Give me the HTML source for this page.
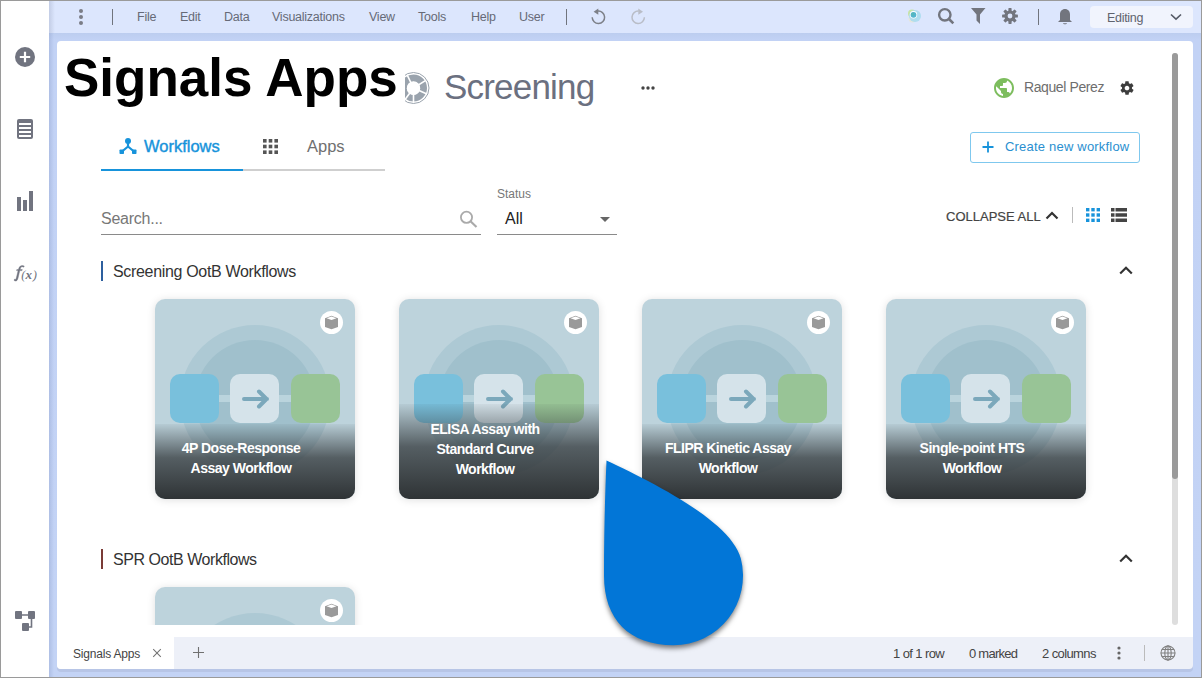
<!DOCTYPE html>
<html><head><meta charset="utf-8">
<style>
*{margin:0;padding:0;box-sizing:border-box}
html,body{width:1202px;height:678px;overflow:hidden;background:#fff;font-family:"Liberation Sans",sans-serif}
.a{position:absolute}
.t{position:absolute;white-space:nowrap;line-height:1}
#frame{position:absolute;left:0;top:0;width:1202px;height:678px;border:1px solid #9a9a9a;z-index:50;pointer-events:none}
#side{position:absolute;left:1px;top:1px;width:48px;height:676px;background:#fff}
#topbar{position:absolute;left:49px;top:1px;width:1152px;height:32px;background:#dce6fd}
#topsh{position:absolute;left:49px;top:1px;width:6px;height:32px;background:linear-gradient(to right,rgba(120,130,160,0.25),rgba(120,130,160,0))}
#strip{position:absolute;left:49px;top:33px;width:1152px;height:644px;background:linear-gradient(to bottom,#bccdef 0px,#c2d2f5 7px,#c3d3f5 100%)}
#main{position:absolute;left:57px;top:41px;width:1136px;height:620px;background:#fff;border-radius:4px 4px 0 0;overflow:hidden}
#foot{position:absolute;left:57px;top:637px;width:1136px;height:32px;background:#edf0f8;border-radius:0 0 4px 4px;box-shadow:0 3px 0 #b7c5e6}
.menu{position:absolute;top:11px;letter-spacing:-0.25px;font-size:12.5px;color:#666a77;line-height:1;white-space:nowrap}
.sep{position:absolute;width:1px;background:#70747d}
.card{position:absolute;width:200px;height:200px;border-radius:10px;background:#bdd3dc;overflow:hidden;box-shadow:0 1px 8px rgba(0,0,0,0.13)}
.c1{position:absolute;left:25px;top:26px;width:150px;height:150px;border-radius:50%;background:#adc9d4}
.c2{position:absolute;left:40px;top:41px;width:120px;height:120px;border-radius:50%;background:#a0c0cc}
.bar{position:absolute;left:30px;top:96px;width:140px;height:7px;background:#bad4dd}
.sq{position:absolute;top:75.4px;width:49px;height:49px;border-radius:10px}
.arr{position:absolute;left:86px;top:90px}
.badge{position:absolute;left:165px;top:12px;width:23px;height:23px;border-radius:50%;background:#fff}
.badge svg{position:absolute;left:4px;top:4px}
.ov{position:absolute;left:0;right:0;bottom:0;background:linear-gradient(to bottom,rgba(50,55,58,0.05) 0%,rgba(50,55,58,0.75) 45%,rgba(44,48,50,0.98) 100%)}
.tx{position:absolute;left:0;width:172px;text-align:center;color:#fff;font-weight:bold;font-size:14px;line-height:20px;letter-spacing:-0.5px}
</style></head>
<body>
<div id="side"></div>
<div id="topbar"></div>
<div id="topsh"></div>
<div id="strip"></div>
<div class="a" style="left:49px;top:33px;width:5px;height:644px;background:linear-gradient(to right,rgba(100,120,170,0.22),rgba(100,120,170,0))"></div>
<div id="main"></div>
<div class="a" style="left:57px;top:41px;width:1110px;height:584px;overflow:hidden">
<div class="a" style="left:-57px;top:-41px;width:1202px;height:678px">
<div class="card" style="left:155px;top:299px">
<div class="c1"></div><div class="c2"></div>
<div class="bar"></div>
<div class="sq" style="left:15px;background:#79c0dc"></div>
<div class="sq" style="left:75px;background:#d5e3ea"></div>
<div class="sq" style="left:136px;background:#98c496"></div>
<svg class="arr" width="30" height="20" viewBox="0 0 30 20"><path d="M3 10H26M18 2.5L25.5 10L18 17.5" fill="none" stroke="#7ba8bb" stroke-width="4" stroke-linecap="round" stroke-linejoin="round"/></svg>
<div class="badge"><svg width="15" height="15" viewBox="0 0 15 15"><path d="M1 3.2L7.5 0.8L14 3.2V12L7.5 14.2L1 12Z" fill="#9a9a9a"/><path d="M2.6 3.3L7.5 1.6L12.4 3.3L7.5 5Z" fill="#fff"/></svg></div><div class="ov" style="top:125px"></div><div class="tx" style="top:139px">4P Dose-Response<br>Assay Workflow</div></div>
<div class="card" style="left:399px;top:299px">
<div class="c1"></div><div class="c2"></div>
<div class="bar"></div>
<div class="sq" style="left:15px;background:#79c0dc"></div>
<div class="sq" style="left:75px;background:#d5e3ea"></div>
<div class="sq" style="left:136px;background:#98c496"></div>
<svg class="arr" width="30" height="20" viewBox="0 0 30 20"><path d="M3 10H26M18 2.5L25.5 10L18 17.5" fill="none" stroke="#7ba8bb" stroke-width="4" stroke-linecap="round" stroke-linejoin="round"/></svg>
<div class="badge"><svg width="15" height="15" viewBox="0 0 15 15"><path d="M1 3.2L7.5 0.8L14 3.2V12L7.5 14.2L1 12Z" fill="#9a9a9a"/><path d="M2.6 3.3L7.5 1.6L12.4 3.3L7.5 5Z" fill="#fff"/></svg></div><div class="ov" style="top:105px"></div><div class="tx" style="top:119.5px">ELISA Assay with<br>Standard Curve<br>Workflow</div></div>
<div class="card" style="left:642px;top:299px">
<div class="c1"></div><div class="c2"></div>
<div class="bar"></div>
<div class="sq" style="left:15px;background:#79c0dc"></div>
<div class="sq" style="left:75px;background:#d5e3ea"></div>
<div class="sq" style="left:136px;background:#98c496"></div>
<svg class="arr" width="30" height="20" viewBox="0 0 30 20"><path d="M3 10H26M18 2.5L25.5 10L18 17.5" fill="none" stroke="#7ba8bb" stroke-width="4" stroke-linecap="round" stroke-linejoin="round"/></svg>
<div class="badge"><svg width="15" height="15" viewBox="0 0 15 15"><path d="M1 3.2L7.5 0.8L14 3.2V12L7.5 14.2L1 12Z" fill="#9a9a9a"/><path d="M2.6 3.3L7.5 1.6L12.4 3.3L7.5 5Z" fill="#fff"/></svg></div><div class="ov" style="top:125px"></div><div class="tx" style="top:139px">FLIPR Kinetic Assay<br>Workflow</div></div>
<div class="card" style="left:886px;top:299px">
<div class="c1"></div><div class="c2"></div>
<div class="bar"></div>
<div class="sq" style="left:15px;background:#79c0dc"></div>
<div class="sq" style="left:75px;background:#d5e3ea"></div>
<div class="sq" style="left:136px;background:#98c496"></div>
<svg class="arr" width="30" height="20" viewBox="0 0 30 20"><path d="M3 10H26M18 2.5L25.5 10L18 17.5" fill="none" stroke="#7ba8bb" stroke-width="4" stroke-linecap="round" stroke-linejoin="round"/></svg>
<div class="badge"><svg width="15" height="15" viewBox="0 0 15 15"><path d="M1 3.2L7.5 0.8L14 3.2V12L7.5 14.2L1 12Z" fill="#9a9a9a"/><path d="M2.6 3.3L7.5 1.6L12.4 3.3L7.5 5Z" fill="#fff"/></svg></div><div class="ov" style="top:125px"></div><div class="tx" style="top:139px">Single-point HTS<br>Workflow</div></div>
<div class="card" style="left:155px;top:587px">
<div class="c1"></div><div class="c2"></div>
<div class="bar"></div>
<div class="sq" style="left:15px;background:#79c0dc"></div>
<div class="sq" style="left:75px;background:#d5e3ea"></div>
<div class="sq" style="left:136px;background:#98c496"></div>
<svg class="arr" width="30" height="20" viewBox="0 0 30 20"><path d="M3 10H26M18 2.5L25.5 10L18 17.5" fill="none" stroke="#7ba8bb" stroke-width="4" stroke-linecap="round" stroke-linejoin="round"/></svg>
<div class="badge"><svg width="15" height="15" viewBox="0 0 15 15"><path d="M1 3.2L7.5 0.8L14 3.2V12L7.5 14.2L1 12Z" fill="#9a9a9a"/><path d="M2.6 3.3L7.5 1.6L12.4 3.3L7.5 5Z" fill="#fff"/></svg></div></div>

</div></div>
<div id="foot"></div>
<div id="frame"></div>

<!-- top menu -->
<div class="a" style="left:79px;top:9px;width:4px;height:4px;border-radius:2px;background:#7a7d86"></div>
<div class="a" style="left:79px;top:15px;width:4px;height:4px;border-radius:2px;background:#7a7d86"></div>
<div class="a" style="left:79px;top:21px;width:4px;height:4px;border-radius:2px;background:#7a7d86"></div>
<div class="sep" style="left:112px;top:9px;height:16px"></div>
<div class="menu" style="left:137px">File</div>
<div class="menu" style="left:180px">Edit</div>
<div class="menu" style="left:224px">Data</div>
<div class="menu" style="left:272px">Visualizations</div>
<div class="menu" style="left:369px">View</div>
<div class="menu" style="left:418px">Tools</div>
<div class="menu" style="left:471px">Help</div>
<div class="menu" style="left:519px">User</div>
<div class="sep" style="left:566px;top:9px;height:16px"></div>

<!-- heading -->
<div class="t" style="left:64px;top:49.7px;font-size:53px;font-weight:bold;color:#000;transform:scaleY(1.026);transform-origin:0 0">Signals Apps</div>
<div class="t" style="left:444px;top:69.3px;font-size:35px;letter-spacing:-0.8px;color:#6b7080">Screening</div>
<div class="t" style="left:1024px;top:80px;font-size:14px;letter-spacing:-0.4px;color:#6e6e6e">Raquel Perez</div>

<!-- tabs -->
<div class="t" style="left:144px;top:138px;font-size:16.5px;color:#1793db;-webkit-text-stroke:0.4px #1793db">Workflows</div>
<div class="t" style="left:307px;top:138px;font-size:16.5px;color:#707070">Apps</div>
<div class="a" style="left:101px;top:169px;width:284px;height:2px;background:#cfcfcf"></div>
<div class="a" style="left:101px;top:169px;width:142px;height:2px;background:#1793db"></div>

<!-- search -->
<div class="t" style="left:101px;top:211px;font-size:16px;letter-spacing:-0.25px;color:#777">Search...</div>
<div class="a" style="left:101px;top:234px;width:380px;height:1px;background:#8a8a8a"></div>
<div class="t" style="left:497px;top:188px;font-size:12px;color:#777">Status</div>
<div class="t" style="left:505px;top:211px;font-size:16px;color:#222">All</div>
<div class="a" style="left:497px;top:234px;width:120px;height:1px;background:#8a8a8a"></div>

<div class="t" style="left:946px;top:210px;font-size:13px;color:#444;-webkit-text-stroke:0.2px #444">COLLAPSE ALL</div>
<div class="a" style="left:1072px;top:207px;width:1px;height:16px;background:#bbb"></div>

<div class="a" style="left:970px;top:132px;width:170px;height:31px;border:1px solid #7fc8ee;border-radius:3px"></div>
<div class="t" style="left:1005px;top:140px;font-size:13px;letter-spacing:0.2px;color:#2a8fd0">Create new workflow</div>

<!-- sections -->
<div class="a" style="left:101px;top:261px;width:2px;height:20px;background:#2d5f9e"></div>
<div class="t" style="left:113px;top:264px;font-size:16px;letter-spacing:-0.33px;color:#333">Screening OotB Workflows</div>
<div class="a" style="left:101px;top:549px;width:2px;height:20px;background:#7a3b36"></div>
<div class="t" style="left:113px;top:552px;font-size:16px;letter-spacing:-0.45px;color:#333">SPR OotB Workflows</div>

<!-- footer -->
<div class="a" style="left:57px;top:637px;width:117px;height:32px;background:#fff;border-radius:0 0 0 4px"></div>
<div class="t" style="left:73px;top:648px;font-size:12px;letter-spacing:-0.2px;color:#444">Signals Apps</div>
<div class="t" style="left:893px;top:647px;font-size:13px;letter-spacing:-0.6px;color:#444">1 of 1 row</div>
<div class="t" style="left:969px;top:647px;font-size:13px;letter-spacing:-0.75px;color:#444">0 marked</div>
<div class="t" style="left:1042px;top:647px;font-size:13px;letter-spacing:-0.6px;color:#444">2 columns</div>
<div class="a" style="left:1144px;top:645px;width:1px;height:16px;background:#bbb"></div>


<!-- sidebar icons -->
<svg class="a" style="left:15px;top:47px" width="20" height="20" viewBox="0 0 20 20"><circle cx="10" cy="10" r="10" fill="#717480"/><path d="M10 4.8V15.2M4.8 10H15.2" stroke="#fff" stroke-width="2.2"/></svg>
<svg class="a" style="left:17px;top:119px" width="16" height="20" viewBox="0 0 16 20"><rect x="0" y="0" width="16" height="20" rx="2" fill="#717480"/><rect x="2" y="4" width="12" height="2" fill="#fff"/><rect x="2" y="8" width="12" height="2" fill="#fff"/><rect x="2" y="12" width="12" height="2" fill="#fff"/><rect x="2" y="16" width="12" height="2" fill="#fff"/></svg>
<svg class="a" style="left:17px;top:191px" width="16" height="20" viewBox="0 0 16 20"><rect x="0" y="6" width="4" height="14" fill="#717480"/><rect x="6" y="9" width="4" height="11" fill="#717480"/><rect x="12" y="0" width="4" height="20" fill="#717480"/></svg>
<svg class="a" style="left:12px;top:265px" width="28" height="18" viewBox="0 0 28 18"><path d="M2 15.2C3.5 16.8 5.2 16.2 6 13.2L7.8 5.6H10L10.3 4.6H8.1L8.4 3.4C8.9 1.5 10.2 1.3 11.6 2.2L12.3 1.1C10.3 -0.1 7.6 0.6 6.8 3.3L6.4 4.6H4.8L4.5 5.6H6.1L4.3 13.1C3.9 14.6 3.1 14.8 2.6 14.1Z" fill="#717480" stroke="#717480" stroke-width="0.4"/><text x="9.2" y="14" font-family="Liberation Serif" font-style="italic" font-size="12.5" fill="#717480">(</text><text x="13.6" y="14" font-family="Liberation Serif" font-style="italic" font-weight="bold" font-size="13" fill="#717480">x</text><text x="20.8" y="14" font-family="Liberation Serif" font-style="italic" font-size="12.5" fill="#717480">)</text></svg>
<svg class="a" style="left:15px;top:611px" width="21" height="20" viewBox="0 0 21 20"><rect x="0" y="0" width="7" height="8" rx="1" fill="#717480"/><rect x="13" y="0" width="7" height="8" rx="1" fill="#717480"/><rect x="7" y="12" width="7" height="8" rx="1" fill="#717480"/><path d="M7 4H13M16.5 8V16H14" fill="none" stroke="#717480" stroke-width="1.6"/></svg>

<!-- topbar icons -->
<svg class="a" style="left:590px;top:8px" width="16" height="18" viewBox="0 0 16 18"><path d="M7.9 3.1A6.2 6.2 0 1 1 2.2 9.3" fill="none" stroke="#7d8088" stroke-width="1.5"/><path d="M3.6 3.7L8.3 0.6V6.8Z" fill="#7d8088"/></svg>
<svg class="a" style="left:630px;top:8px" width="16" height="18" viewBox="0 0 16 18"><g transform="translate(16.6,0) scale(-1,1)"><path d="M7.9 3.1A6.2 6.2 0 1 1 2.2 9.3" fill="none" stroke="#b9bdc7" stroke-width="1.5"/><path d="M3.6 3.7L8.3 0.6V6.8Z" fill="#b9bdc7"/></g></svg>
<svg class="a" style="left:906px;top:8px" width="16" height="16" viewBox="0 0 16 16"><circle cx="6" cy="5.5" r="4" fill="#c7e3a6"/><circle cx="6.5" cy="10.5" r="4" fill="#e6e6dc"/><circle cx="9" cy="8" r="6" fill="#a9dcee" opacity="0.9"/><circle cx="7.5" cy="6.8" r="3.7" fill="#fff"/><circle cx="7.5" cy="6.8" r="2.9" fill="#52b5cf"/><circle cx="6.8" cy="6.1" r="1.6" fill="#56b9b0" opacity="0.7"/></svg>
<svg class="a" style="left:937px;top:7px" width="18" height="18" viewBox="0 0 18 18"><circle cx="7.8" cy="7.8" r="5.7" fill="none" stroke="#72757e" stroke-width="2.4"/><path d="M12 12L16.3 16.3" stroke="#72757e" stroke-width="2.6"/></svg>
<svg class="a" style="left:971px;top:8px" width="15" height="16" viewBox="0 0 15 16"><path d="M0 0H14.5L9 6.5V16L5.5 12.5V6.5Z" fill="#72757e"/></svg>
<svg class="a" style="left:1002px;top:8px" width="16" height="16" viewBox="0 0 16 16"><circle cx="8" cy="8" r="5.6" fill="#72757e"/><rect x="6.4" y="0.10000000000000053" width="3.2" height="4.3" rx="0.6" fill="#72757e" transform="rotate(0.0 8 8)"/><rect x="6.4" y="0.10000000000000053" width="3.2" height="4.3" rx="0.6" fill="#72757e" transform="rotate(45.0 8 8)"/><rect x="6.4" y="0.10000000000000053" width="3.2" height="4.3" rx="0.6" fill="#72757e" transform="rotate(90.0 8 8)"/><rect x="6.4" y="0.10000000000000053" width="3.2" height="4.3" rx="0.6" fill="#72757e" transform="rotate(135.0 8 8)"/><rect x="6.4" y="0.10000000000000053" width="3.2" height="4.3" rx="0.6" fill="#72757e" transform="rotate(180.0 8 8)"/><rect x="6.4" y="0.10000000000000053" width="3.2" height="4.3" rx="0.6" fill="#72757e" transform="rotate(225.0 8 8)"/><rect x="6.4" y="0.10000000000000053" width="3.2" height="4.3" rx="0.6" fill="#72757e" transform="rotate(270.0 8 8)"/><rect x="6.4" y="0.10000000000000053" width="3.2" height="4.3" rx="0.6" fill="#72757e" transform="rotate(315.0 8 8)"/><circle cx="8" cy="8" r="2.4" fill="#dce6fd"/></svg>
<div class="sep" style="left:1038px;top:9px;height:16px"></div>
<svg class="a" style="left:1058px;top:9px" width="14" height="16" viewBox="0 0 14 16"><path d="M7 0C10 0 12 2.3 12 5.5V11L14 13H0L2 11V5.5C2 2.3 4 0 7 0Z" fill="#72757e"/><path d="M5 14.2H9C9 15.5 5 15.5 5 14.2Z" fill="#72757e"/></svg>
<div class="a" style="left:1090px;top:6px;width:103px;height:22px;background:#f1f4fd;border-radius:4px"></div>
<div class="t" style="left:1107px;top:12px;font-size:12.5px;letter-spacing:-0.3px;color:#5f636e">Editing</div>
<svg class="a" style="left:1170px;top:13px" width="12" height="8" viewBox="0 0 12 8"><path d="M1 1.5L6 6.2L11 1.5" fill="none" stroke="#555a66" stroke-width="1.6"/></svg>

<!-- heading icons -->
<svg class="a" style="left:397px;top:72px" width="33" height="33" viewBox="0 0 33 33"><defs><clipPath id="cl"><rect x="8" y="0" width="30" height="33"/></clipPath></defs><g clip-path="url(#cl)"><circle cx="16.5" cy="16" r="15.5" fill="none" stroke="#9aa3ad" stroke-width="1"/><circle cx="16.5" cy="16" r="10.1" fill="none" stroke="#9aa3ad" stroke-width="6.8"/><path d="M16.5 16L10.36 3.42M16.5 16L28.37 8.58M16.5 16L29.29 21.69M16.5 16L16.50 30.00M16.5 16L8.27 27.33" stroke="#fff" stroke-width="1.6"/><circle cx="16.5" cy="16.3" r="6.6" fill="#fff"/></g></svg>
<svg class="a" style="left:641px;top:86px" width="14" height="4" viewBox="0 0 14 4"><circle cx="2" cy="2" r="1.7" fill="#444"/><circle cx="7" cy="2" r="1.7" fill="#444"/><circle cx="12" cy="2" r="1.7" fill="#444"/></svg>
<svg class="a" style="left:992px;top:76px" width="24" height="24" viewBox="0 0 24 24"><path fill="#7dbd5e" fill-rule="evenodd" d="M12 2C6.48 2 2 6.48 2 12s4.48 10 10 10 10-4.48 10-10S17.52 2 12 2zm-1 17.930c-3.950-.49-7-3.850-7-7.930 0-.62.080-1.21.210-1.790L9 15v1c0 1.100.9 2 2 2v1.930zm6.900-2.540c-.26-.81-1-1.390-1.900-1.390h-1v-3c0-.55-.45-1-1-1H8v-2h2c.55 0 1-.45 1-1V7h2c1.100 0 2-.9 2-2v-.41c2.930 1.190 5 4.060 5 7.410 0 2.080-.8 3.970-2.100 5.390z"/></svg>
<svg class="a" style="left:1119px;top:80px" width="16" height="16" viewBox="0 0 24 24"><path fill="#3d3d3d" d="M19.4 13c.04-.33.1-.66.1-1s-.06-.67-.1-1l2.1-1.65c.19-.15.24-.42.12-.64l-2-3.46c-.12-.22-.39-.3-.61-.22l-2.49 1c-.52-.4-1.080-.73-1.69-.98l-.38-2.65C14.46 2.180 14.250 2 14 2h-4c-.25 0-.46.18-.49.42l-.38 2.65c-.61.25-1.17.59-1.69.98l-2.49-1c-.23-.09-.49 0-.61.22l-2 3.46c-.13.22-.07.49.12.64L4.6 11c-.04.33-.1.67-.1 1s.06.67.1 1l-2.1 1.65c-.19.15-.24.42-.12.64l2 3.46c.12.22.39.3.61.22l2.49-1c.52.4 1.08.73 1.69.98l.38 2.65c.03.24.24.42.49.42h4c.25 0 .46-.18.49-.42l.38-2.65c.61-.25 1.17-.59 1.69-.98l2.49 1c.23.09.49 0 .61-.22l2-3.46c.12-.22.07-.49-.12-.64L19.4 13zM12 15.5c-1.93 0-3.5-1.57-3.5-3.5s1.57-3.5 3.5-3.5 3.5 1.570 3.5 3.5-1.57 3.5-3.5 3.5z"/></svg>

<!-- tab icons -->
<svg class="a" style="left:119px;top:138px" width="18" height="16" viewBox="0 0 18 16"><circle cx="9" cy="3" r="3" fill="#1793db"/><path d="M9 3V8.5L3 13.5M9 8.5L15 13.5" fill="none" stroke="#1793db" stroke-width="2.2"/><rect x="0.5" y="11.5" width="4.5" height="4.5" rx="0.8" fill="#1793db"/><rect x="13" y="11.5" width="4.5" height="4.5" rx="0.8" fill="#1793db"/></svg>
<svg class="a" style="left:263px;top:139px" width="15" height="15" viewBox="0 0 15 15"><g fill="#555"><rect x="0" y="0" width="3.6" height="3.6"/><rect x="5.7" y="0" width="3.6" height="3.6"/><rect x="11.4" y="0" width="3.6" height="3.6"/><rect x="0" y="5.7" width="3.6" height="3.6"/><rect x="5.7" y="5.7" width="3.6" height="3.6"/><rect x="11.4" y="5.7" width="3.6" height="3.6"/><rect x="0" y="11.4" width="3.6" height="3.6"/><rect x="5.7" y="11.4" width="3.6" height="3.6"/><rect x="11.4" y="11.4" width="3.6" height="3.6"/></g></svg>

<!-- search / status icons -->
<svg class="a" style="left:459px;top:210px" width="19" height="18" viewBox="0 0 19 18"><circle cx="7.5" cy="7.3" r="5.6" fill="none" stroke="#aaa" stroke-width="1.8"/><path d="M11.5 11.3L17.5 17" stroke="#aaa" stroke-width="2.2"/></svg>
<svg class="a" style="left:600px;top:217px" width="10" height="5" viewBox="0 0 10 5"><path d="M0 0H10L5 5Z" fill="#666"/></svg>

<!-- collapse / view icons -->
<svg class="a" style="left:1045px;top:211px" width="14" height="9" viewBox="0 0 14 9"><path d="M1.5 7.5L7 2L12.5 7.5" fill="none" stroke="#333" stroke-width="2.2"/></svg>
<svg class="a" style="left:1086px;top:208px" width="14" height="14" viewBox="0 0 14 14"><g fill="#1793db"><rect x="0" y="0" width="3.4" height="3.4"/><rect x="5.3" y="0" width="3.4" height="3.4"/><rect x="10.6" y="0" width="3.4" height="3.4"/><rect x="0" y="5.3" width="3.4" height="3.4"/><rect x="5.3" y="5.3" width="3.4" height="3.4"/><rect x="10.6" y="5.3" width="3.4" height="3.4"/><rect x="0" y="10.6" width="3.4" height="3.4"/><rect x="5.3" y="10.6" width="3.4" height="3.4"/><rect x="10.6" y="10.6" width="3.4" height="3.4"/></g></svg>
<svg class="a" style="left:1111px;top:208px" width="16" height="14" viewBox="0 0 16 14"><g fill="#444"><rect x="0" y="0" width="3.5" height="3.5"/><rect x="4.5" y="0" width="11.5" height="3.5"/><rect x="0" y="5.25" width="3.5" height="3.5"/><rect x="4.5" y="5.25" width="11.5" height="3.5"/><rect x="0" y="10.5" width="3.5" height="3.5"/><rect x="4.5" y="10.5" width="11.5" height="3.5"/></g></svg>
<svg class="a" style="left:982px;top:141px" width="12" height="12" viewBox="0 0 12 12"><path d="M6 0.5V11.5M0.5 6H11.5" stroke="#1793db" stroke-width="1.8"/></svg>

<!-- section chevrons -->
<svg class="a" style="left:1119px;top:266px" width="14" height="9" viewBox="0 0 14 9"><path d="M1.2 7.5L7 1.8L12.8 7.5" fill="none" stroke="#333" stroke-width="2.2"/></svg>
<svg class="a" style="left:1119px;top:554px" width="14" height="9" viewBox="0 0 14 9"><path d="M1.2 7.5L7 1.8L12.8 7.5" fill="none" stroke="#333" stroke-width="2.2"/></svg>

<!-- scrollbar -->
<div class="a" style="left:1172px;top:53px;width:6px;height:572px;border-radius:3px;background:#dedede"></div>
<div class="a" style="left:1172px;top:53px;width:6px;height:426px;border-radius:3px;background:#9a9a9a"></div>

<!-- footer icons -->
<svg class="a" style="left:152px;top:648px" width="10" height="10" viewBox="0 0 10 10"><path d="M1.2 1.2L8.8 8.8M8.8 1.2L1.2 8.8" stroke="#737373" stroke-width="1.05"/></svg>
<svg class="a" style="left:192px;top:646px" width="13" height="13" viewBox="0 0 13 13"><path d="M6.5 1V12M1 6.5H12" stroke="#707070" stroke-width="1.1"/></svg>
<svg class="a" style="left:1117px;top:646px" width="4" height="14" viewBox="0 0 4 14"><circle cx="2" cy="2" r="1.6" fill="#666"/><circle cx="2" cy="7" r="1.6" fill="#666"/><circle cx="2" cy="12" r="1.6" fill="#666"/></svg>
<svg class="a" style="left:1160px;top:645px" width="16" height="16" viewBox="0 0 16 16"><g fill="none" stroke="#808080" stroke-width="1.1"><circle cx="8" cy="8" r="7"/><ellipse cx="8" cy="8" rx="3.2" ry="7.2"/><path d="M8 0.8V15.2M0.8 8H15.2M1.8 4.5H14.2M1.8 11.5H14.2"/></g></svg>

<!-- drop -->
<svg class="a" style="left:0;top:0;z-index:40;filter:drop-shadow(0 3px 2.5px rgba(0,0,0,0.5))" width="1202" height="678" viewBox="0 0 1202 678"><path d="M606.5 460.5 C651.45 481.67 731.26 521.09 740.84 558.60 A69.5 69.5 0 0 1 673.5 645.3 C629.5 645.3 604 619.8 604 575.8 C604 535 605 495 606.5 460.5 Z" fill="#0276d7"/></svg>
</body></html>
